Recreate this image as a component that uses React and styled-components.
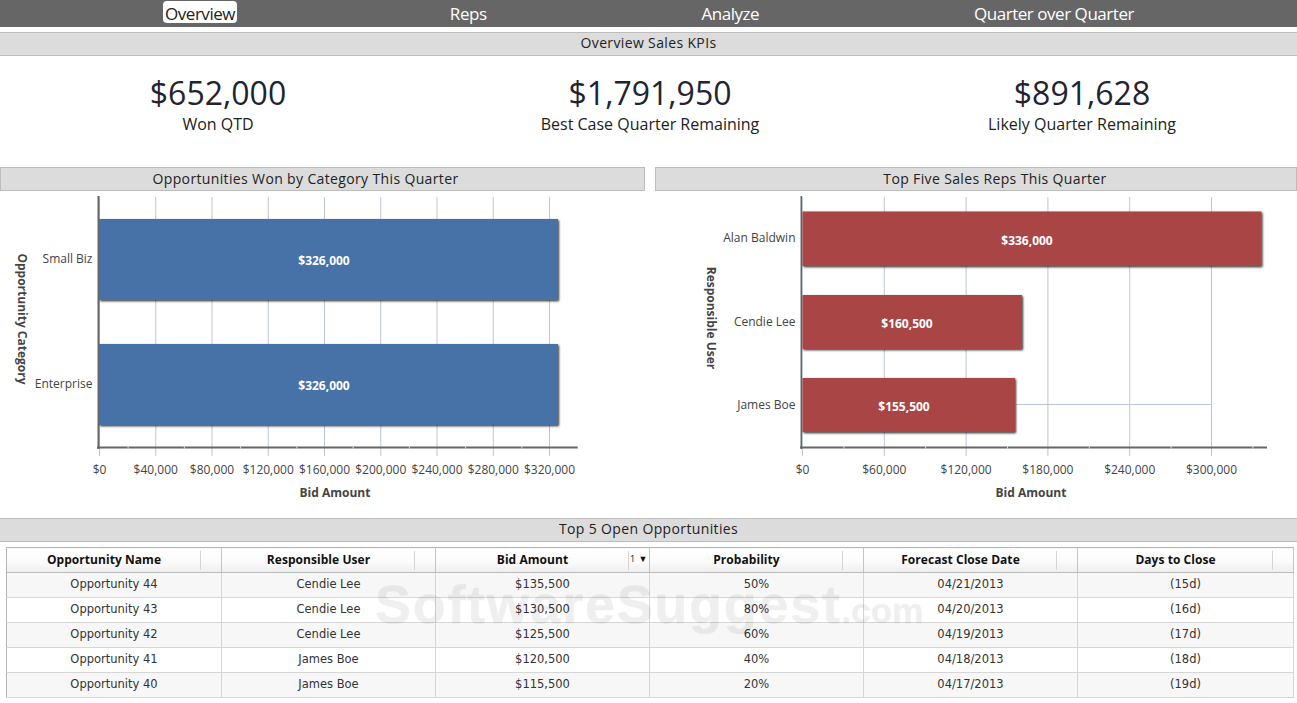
import React from "react";
import styled, { createGlobalStyle } from "styled-components";

const Global = createGlobalStyle`
  html, body { margin: 0; padding: 0; background: #fff; }
  body { font-family: "Open Sans", "Noto Sans", sans-serif; color: #222; }
`;

const Page = styled.div`
  position: relative;
  width: 1297px;
  height: 703px;
  overflow: hidden;
  background: #fff;
`;

const Nav = styled.nav`
  height: 27px;
  background: #666;
  display: flex;
  justify-content: space-between;
  align-items: flex-start;
  padding: 1px 161px 0 163px;
  box-sizing: border-box;
`;

const NavItem = styled.a`
  display: block;
  height: 22px;
  line-height: 26px;
  padding: 0 2px;
  border-radius: 4px;
  font-size: 17px;
  letter-spacing: -0.46px;
  color: ${(p) => (p.$active ? "#222" : "#fff")};
  background: ${(p) => (p.$active ? "#fff" : "transparent")};
`;

const SectionBar = styled.h2`
  margin: 0;
  height: 24px;
  box-sizing: border-box;
  background: #dcdcdc;
  border: 1px solid #bcbcbc;
  border-width: ${(p) => (p.$boxed ? "1px" : "1px 0")};
  font-size: 14px;
  font-weight: 400;
  line-height: ${(p) => (p.$boxed ? "22px" : "20px")};
  letter-spacing: 0.36px;
  text-align: center;
  color: #222;
  padding: ${(p) => (p.$pad ? p.$pad : "0")};
`;

const KpiSection = styled.section`
  margin-top: 5px;
`;

const KpiGrid = styled.div`
  display: grid;
  grid-template-columns: repeat(3, 432px);
  height: 111px;
  padding-left: 2px;
`;

const Kpi = styled.div`
  text-align: center;
  padding-top: 16px;
`;

const KpiValue = styled.div`
  font-size: 32px;
  line-height: 42px;
  color: #1f2430;
`;

const KpiLabel = styled.div`
  font-size: 16px;
  line-height: 20px;
  color: #222;
`;

const ChartRow = styled.div`
  display: flex;
  gap: 10px;
  height: 351px;
`;

const ChartPanel = styled.section`
  width: ${(p) => p.$w}px;
  flex: none;
`;

const ChartSvg = styled.svg`
  display: block;
  font-family: "Open Sans", "Noto Sans", sans-serif;
`;

const TableSection = styled.section``;

const TableWrap = styled.div`
  margin: 5px 4px 0 6px;
`;

const Table = styled.table`
  width: 1287px;
  table-layout: fixed;
  border-collapse: collapse;
  border: 1px solid #b5b5b5;
  font-size: 12px;
`;

const HeadCell = styled.th`
  position: relative;
  box-sizing: border-box;
  width: ${(p) => p.$w}px;
  height: 25px;
  padding: 0 20px 2px 0;
  border-right: 1px solid #c4c4c4;
  border-bottom: 1px solid #bbb;
  background: linear-gradient(#fff, #fbfbfb 55%, #eeeeee);
  font-size: 12px;
  font-weight: 700;
  color: #111;
  letter-spacing: 0.05px;
  &::after {
    content: "";
    position: absolute;
    right: 20px;
    top: 3px;
    bottom: 2px;
    width: 1px;
    background: #d4d4d4;
  }
`;

const SortMark = styled.span`
  position: absolute;
  right: 0;
  top: 2px;
  font-size: 9px;
  line-height: 18px;
  width: 20px;
  text-align: center;
  font-weight: 400;
  letter-spacing: 0.5px;
`;

const Row = styled.tr`
  height: 25px;
  background: ${(p) => (p.$odd ? "#f7f7f7" : "#fff")};
`;

const Cell = styled.td`
  box-sizing: border-box;
  height: 25px;
  padding: 0 0 2px;
  text-align: center;
  font-family: "DejaVu Sans", sans-serif;
  font-size: 11.5px;
  color: #333;
  border-right: 1px solid #d6d6d6;
  border-bottom: 1px solid #d6d6d6;
`;

const Watermark = styled.div`
  position: absolute;
  left: 375px;
  top: 570px;
  font-family: "Liberation Sans", Arial, sans-serif;
  font-weight: 700;
  font-size: 54px;
  line-height: 68px;
  letter-spacing: 1.7px;
  white-space: nowrap;
  color: #000;
  -webkit-text-stroke: 0.6px #000;
  opacity: 0.06;
  pointer-events: none;
`;

const WatermarkCom = styled.span`
  font-size: 35px;
  letter-spacing: 0;
`;

const TEXT = "#444";
const GRID = "#bcc7d4";
const AXIS = "#666";

function Chart({ x0, width, height, color, ticks, tickMinor, bars, axis, title, vTitle, guide }) {
  const top = 191;
  const axisY = 447.5;
  const minors = [];
  for (let x = axis.x; x < axis.end; x += tickMinor) minors.push(x);
  return (
    <ChartSvg
      width={width}
      height={height}
      viewBox={`${x0} ${top} ${width} ${height}`}
    >
      <defs>
        <filter id={`shadow-${x0}`} x="-5%" y="-10%" width="110%" height="125%">
          <feDropShadow dx="1" dy="1.2" stdDeviation="1.1" floodColor="#000" floodOpacity="0.8" />
        </filter>
      </defs>
      {ticks.map((t) => (
        <line key={t.x} x1={t.x} x2={t.x} y1={197} y2={456} stroke={GRID} strokeWidth="1" />
      ))}
      {guide && <line x1={guide.x1} x2={guide.x2} y1={guide.y} y2={guide.y} stroke={GRID} strokeWidth="1" />}
      {bars.map((b) => (
        <g key={b.name}>
          <rect
            x={axis.bar}
            y={b.y}
            width={b.right - axis.bar}
            height={b.h}
            fill={color}
            filter={`url(#shadow-${x0})`}
          />
          <text x={b.labelX} y={b.labelY} textAnchor="middle" fontSize="12" fontWeight="700" fill="#fff">
            {b.value}
          </text>
          <text x={axis.x - 7} y={b.nameY} textAnchor="end" fontSize="12" fill={TEXT}>
            {b.name}
          </text>
        </g>
      ))}
      <rect x={axis.line} y={196} width={axis.lineW} height="253" fill={AXIS} />
      <rect x={axis.line - 0.5} y={axisY - 1} width={axis.end - axis.line + 0.5} height="2" fill={AXIS} />
      {minors.map((x) => (
        <rect key={x} x={x + tickMinor / 2} y={axisY - 1} width="1" height="2" fill="#fff" opacity="0.8" />
      ))}
      {ticks.map((t) => (
        <text key={t.x} x={t.x} y={474} textAnchor="middle" fontSize="12" fill={TEXT}>
          {t.label}
        </text>
      ))}
      <text x={title.x} y={497} textAnchor="middle" fontSize="12" fontWeight="700" fill={TEXT}>
        {title.text}
      </text>
      <text
        transform={`translate(${vTitle.x} ${vTitle.y}) rotate(90)`}
        textAnchor="middle"
        fontSize="12"
        fontWeight="700"
        fill={TEXT}
      >
        {vTitle.text}
      </text>
    </ChartSvg>
  );
}

const leftTicks = ["$0", "$40,000", "$80,000", "$120,000", "$160,000", "$200,000", "$240,000", "$280,000", "$320,000"].map(
  (label, i) => ({ label, x: 99.5 + i * 56.25 })
);
const rightTicks = ["$0", "$60,000", "$120,000", "$180,000", "$240,000", "$300,000"].map((label, i) => ({
  label,
  x: 802.5 + i * 81.8,
}));

const rows = [
  ["Opportunity 44", "Cendie Lee", "$135,500", "50%", "04/21/2013", "(15d)"],
  ["Opportunity 43", "Cendie Lee", "$130,500", "80%", "04/20/2013", "(16d)"],
  ["Opportunity 42", "Cendie Lee", "$125,500", "60%", "04/19/2013", "(17d)"],
  ["Opportunity 41", "James Boe", "$120,500", "40%", "04/18/2013", "(18d)"],
  ["Opportunity 40", "James Boe", "$115,500", "20%", "04/17/2013", "(19d)"],
];
const heads = ["Opportunity Name", "Responsible User", "Bid Amount", "Probability", "Forecast Close Date", "Days to Close"];
const colWidths = [215, 214, 214, 214, 214, 216];
const navItems = ["Overview", "Reps", "Analyze", "Quarter over Quarter"];
const kpis = [
  ["$652,000", "Won QTD"],
  ["$1,791,950", "Best Case Quarter Remaining"],
  ["$891,628", "Likely Quarter Remaining"],
];

export default function App() {
  return (
    <Page>
      <Global />
      <Nav>
        {navItems.map((n, i) => (
          <NavItem key={n} $active={i === 0}>
            {n}
          </NavItem>
        ))}
      </Nav>
      <KpiSection>
        <SectionBar>Overview Sales KPIs</SectionBar>
        <KpiGrid>
          {kpis.map(([v, l]) => (
            <Kpi key={l}>
              <KpiValue>{v}</KpiValue>
              <KpiLabel>{l}</KpiLabel>
            </Kpi>
          ))}
        </KpiGrid>
      </KpiSection>
      <ChartRow>
        <ChartPanel $w={645}>
          <SectionBar $boxed $pad="0 34px 0 0">Opportunities Won by Category This Quarter</SectionBar>
          <Chart
            x0={0}
            width={645}
            height={320}
            color="#4672a8"
            ticks={leftTicks}
            tickMinor={56.25}
            axis={{ x: 99.5, bar: 99, line: 97.5, lineW: 2, end: 578 }}
            title={{ text: "Bid Amount", x: 335 }}
            vTitle={{ text: "Opportunity Category", x: 17.5, y: 319 }}
            bars={[
              { name: "Small Biz", value: "$326,000", y: 219, h: 81, right: 558, labelX: 324, labelY: 265, nameY: 263 },
              { name: "Enterprise", value: "$326,000", y: 344, h: 81, right: 558, labelX: 324, labelY: 390, nameY: 388 },
            ]}
          />
        </ChartPanel>
        <ChartPanel $w={642}>
          <SectionBar $boxed $pad="0 0 0 38px">Top Five Sales Reps This Quarter</SectionBar>
          <Chart
            x0={655}
            width={642}
            height={320}
            color="#aa4444"
            ticks={rightTicks}
            tickMinor={81.8}
            axis={{ x: 802.5, bar: 802.5, line: 800.5, lineW: 1.5, end: 1267 }}
            title={{ text: "Bid Amount", x: 1031 }}
            vTitle={{ text: "Responsible User", x: 707, y: 318 }}
            guide={{ x1: 1016, x2: 1212, y: 404.5 }}
            bars={[
              { name: "Alan Baldwin", value: "$336,000", y: 211.5, h: 54.5, right: 1261.5, labelX: 1027, labelY: 245, nameY: 242 },
              { name: "Cendie Lee", value: "$160,500", y: 295, h: 54, right: 1022, labelX: 907, labelY: 328, nameY: 326 },
              { name: "James Boe", value: "$155,500", y: 378, h: 54, right: 1015, labelX: 904, labelY: 411, nameY: 409 },
            ]}
          />
        </ChartPanel>
      </ChartRow>
      <TableSection>
        <SectionBar>Top 5 Open Opportunities</SectionBar>
        <TableWrap>
          <Table>
            <thead>
              <tr>
                {heads.map((h, i) => (
                  <HeadCell key={h} $w={colWidths[i]}>
                    {h}
                    {i === 2 && <SortMark>1 ▼</SortMark>}
                  </HeadCell>
                ))}
              </tr>
            </thead>
            <tbody>
              {rows.map((r, i) => (
                <Row key={r[0]} $odd={i % 2 === 0}>
                  {r.map((c, j) => (
                    <Cell key={j}>{c}</Cell>
                  ))}
                </Row>
              ))}
            </tbody>
          </Table>
        </TableWrap>
      </TableSection>
      <Watermark>
        SoftwareSuggest<WatermarkCom>.com</WatermarkCom>
      </Watermark>
    </Page>
  );
}
